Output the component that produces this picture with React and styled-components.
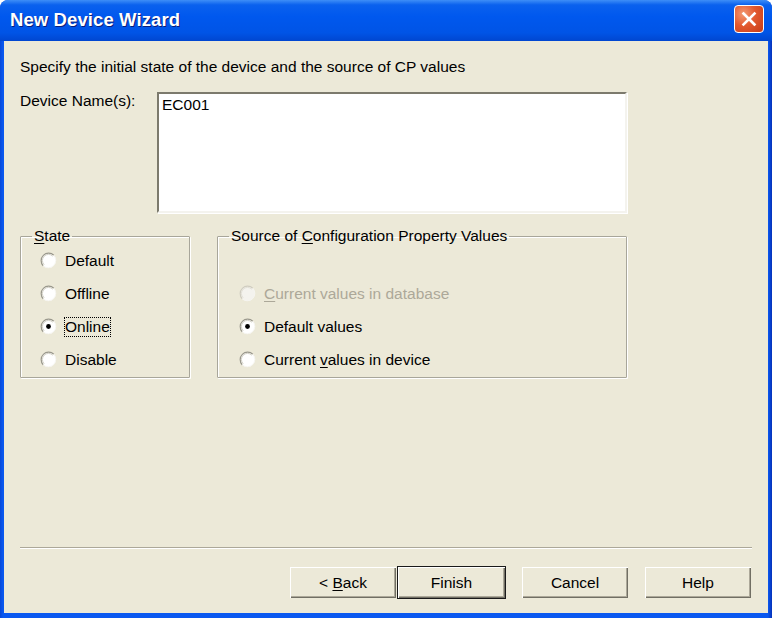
import React from 'react'
import styled, { createGlobalStyle } from 'styled-components'

const Global = createGlobalStyle`
  html, body {
    margin: 0;
    padding: 0;
    background: #ffffff;
  }
  * {
    box-sizing: border-box;
  }
`

const font = `"Liberation Sans", Arial, sans-serif`

const Window = styled.div`
  width: 772px;
  height: 618px;
  display: flex;
  flex-direction: column;
  background: linear-gradient(to right, #0848d8 0px, #0a58f0 3px, #0a58f0 768px, #0631b8 772px);
  border-radius: 8px 8px 0 0;
  overflow: hidden;
  font-family: ${font};
  font-size: 15.5px;
  color: #000;
`

const TitleBar = styled.div`
  height: 41px;
  flex: none;
  display: flex;
  align-items: center;
  justify-content: space-between;
  padding: 0 8px 2px 10px;
  background: linear-gradient(
    to bottom,
    #3e8ef7 0%,
    #0a61ee 12%,
    #0058ee 40%,
    #0054e6 80%,
    #0046d0 100%
  );
`

const Title = styled.div`
  color: #ffffff;
  font-weight: bold;
  font-size: 18.5px;
  letter-spacing: 0.1px;
  text-shadow: 1px 1px 0 #0a1e7a;
`

const CloseButton = styled.div`
  width: 30px;
  height: 28px;
  border: 1px solid #ffffff;
  border-radius: 4px;
  background: radial-gradient(circle at 30% 30%, #f39a74 0%, #e2592f 45%, #c63b17 100%);
  display: flex;
  align-items: center;
  justify-content: center;
  margin-bottom: 1px;
`

const Body = styled.div`
  flex: 1;
  margin: 0 4px 5px 4px;
  background: #ece9d8;
  padding: 17px 16px 0 16px;
  display: flex;
  flex-direction: column;
`

const Intro = styled.div`
  line-height: 18px;
`

const NameRow = styled.div`
  display: flex;
  margin-top: 16px;
`

const NameLabel = styled.div`
  width: 137px;
  line-height: 18px;
`

const TextBox = styled.div`
  width: 470px;
  height: 121px;
  background: #ffffff;
  border-top: 2px solid #7c7a6d;
  border-left: 2px solid #7c7a6d;
  border-right: 2px solid #f4f3ee;
  border-bottom: 2px solid #f4f3ee;
  box-shadow: 1px 1px 0 #ffffff;
  padding: 2px 3px;
  line-height: 18px;
`

const Groups = styled.div`
  display: flex;
  gap: 27px;
  margin-top: 15px;
`

const Group = styled.fieldset`
  margin: 0;
  width: ${(p) => p.$width}px;
  min-width: 0;
  padding: 0 0 1px ${(p) => p.$indent}px;
  border: 1px solid #a8a69a;
  box-shadow: 1px 1px 0 #ffffff, inset 1px 1px 0 #ffffff;
  border-radius: 1px;
`

const Legend = styled.legend`
  line-height: 16px;
  padding: 0 2px;
  margin-left: ${(p) => p.$offset}px;
`

const Row = styled.div`
  height: 33px;
  display: flex;
  align-items: center;
  gap: 8px;
  color: ${(p) => (p.$disabled ? '#aca899' : '#000')};
`

const Spacer = styled.div`
  height: 33px;
`

const Focus = styled.span`
  outline: 1px dotted #000;
  outline-offset: 0px;
  line-height: 18px;
`

const U = styled.span`
  text-decoration: underline;
  text-underline-offset: 2px;
`

const Separator = styled.div`
  margin-top: auto;
  height: 2px;
  border-top: 1px solid #aca899;
  border-bottom: 1px solid #ffffff;
`

const ButtonBar = styled.div`
  display: flex;
  justify-content: flex-end;
  padding: 17px 0 14px 0;
`

const Button = styled.div`
  width: ${(p) => p.$width}px;
  height: 33px;
  margin-left: ${(p) => p.$gap}px;
  display: flex;
  align-items: center;
  justify-content: center;
  white-space: pre;
  background: #ece9d8;
  border: 1px solid ${(p) => (p.$default ? '#1a1a1a' : 'transparent')};
  box-shadow: inset 1px 1px 0 #ffffff, inset -1px -1px 0 #716f64, inset -2px -2px 0 #aca899;
  line-height: 18px;
`

const Radio = ({ checked, disabled }) => (
  <svg width="17" height="17" viewBox="0 0 17 17" style={{ flex: 'none' }}>
    <circle cx="8.5" cy="8.5" r="7.5" fill={disabled ? '#f4f3ee' : '#ffffff'} />
    <path d="M3.2 13.8 A7.5 7.5 0 0 1 13.8 3.2" fill="none" stroke={disabled ? '#d0cdc0' : '#9a988c'} strokeWidth="1.2" />
    <path d="M4.2 12.8 A6 6 0 0 1 12.8 4.2" fill="none" stroke={disabled ? '#e2e0d6' : '#d2d0c5'} strokeWidth="1" />
    <path d="M13.8 3.2 A7.5 7.5 0 0 1 3.2 13.8" fill="none" stroke="#f6f5f0" strokeWidth="1" />
    {checked && <circle cx="8.5" cy="8.5" r="2.4" fill="#000" />}
  </svg>
)

const Option = ({ checked, disabled, children }) => (
  <Row $disabled={disabled}>
    <Radio checked={checked} disabled={disabled} />
    <span>{children}</span>
  </Row>
)

export default function App() {
  return (
    <Window>
      <Global />
      <TitleBar>
        <Title>New Device Wizard</Title>
        <CloseButton>
          <svg width="16" height="16" viewBox="0 0 16 16">
            <path d="M2.5 2.5 L13.5 13.5 M13.5 2.5 L2.5 13.5" stroke="#ffffff" strokeWidth="2.6" strokeLinecap="square" />
          </svg>
        </CloseButton>
      </TitleBar>
      <Body>
        <Intro>Specify the initial state of the device and the source of CP values</Intro>
        <NameRow>
          <NameLabel>Device Name(s):</NameLabel>
          <TextBox>EC001</TextBox>
        </NameRow>
        <Groups>
          <Group $width={170} $indent={19}>
            <Legend $offset={-8}>
              <U>S</U>tate
            </Legend>
            <Option>Default</Option>
            <Option>Offline</Option>
            <Row>
              <Radio checked />
              <Focus>Online</Focus>
            </Row>
            <Option>Disable</Option>
          </Group>
          <Group $width={410} $indent={21}>
            <Legend $offset={-10}>
              Source of <U>C</U>onfiguration Property Values
            </Legend>
            <Spacer />
            <Option disabled>
              <U>C</U>urrent values in database
            </Option>
            <Option checked>Default values</Option>
            <Option>
              Current <U>v</U>alues in device
            </Option>
          </Group>
        </Groups>
        <Separator />
        <ButtonBar>
          <Button $width={108} $gap={0}>
            {'< '}
            <U>B</U>
            {'ack'}
          </Button>
          <Button $width={109} $gap={0} $default>
            Finish
          </Button>
          <Button $width={108} $gap={15}>
            Cancel
          </Button>
          <Button $width={108} $gap={15}>
            Help
          </Button>
        </ButtonBar>
      </Body>
    </Window>
  )
}
